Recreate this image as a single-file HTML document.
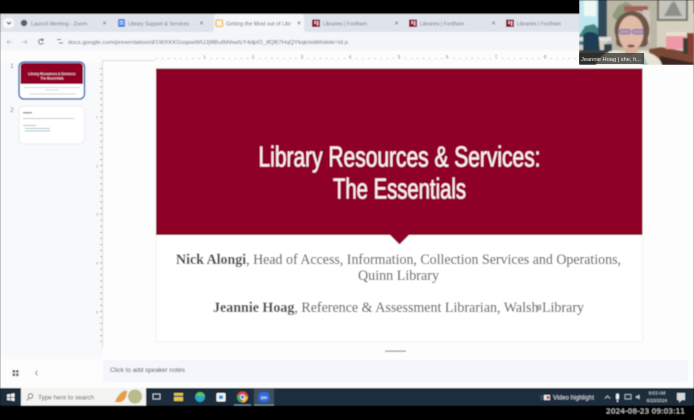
<!DOCTYPE html>
<html><head><meta charset="utf-8"><style>
html,body{margin:0;padding:0;width:694px;height:420px;overflow:hidden;background:#000}
svg{display:block;position:absolute;left:0;top:0}
text{font-family:"Liberation Sans",sans-serif}
.s{font-family:"Liberation Serif",serif}
</style></head><body>
<svg width="694" height="420" viewBox="0 0 694 420" xmlns="http://www.w3.org/2000/svg">
<defs>
<filter id="b" x="-2%" y="-2%" width="104%" height="104%"><feGaussianBlur stdDeviation="0.42"/></filter>
<filter id="b2" x="-10%" y="-10%" width="120%" height="120%"><feGaussianBlur stdDeviation="0.9"/></filter>
<filter id="b3"><feGaussianBlur stdDeviation="0.35"/></filter>
<pattern id="rx" width="6.07" height="6" patternUnits="userSpaceOnUse" x="156" y="56"><rect x="0" y="0" width="1" height="3" fill="#b0b0b0"/></pattern>
<pattern id="ry" width="6" height="6.07" patternUnits="userSpaceOnUse" x="100" y="68"><rect x="0" y="0" width="3" height="1" fill="#b0b0b0"/></pattern>
</defs>
<g filter="url(#b)">
<rect width="694" height="420" fill="#f8f9fb"/>
<rect width="694" height="14" fill="#000"/>
<!-- tabs -->
<rect y="14" width="694" height="18" fill="#dfe3eb"/>
<path d="M211 32q3 0 3-3v-12q0-3 3-3h84q3 0 3 3v12q0 3 3 3z" fill="#f4f6fa"/>
<rect x="3" y="18" width="11" height="10" rx="4" fill="#f6f7fa"/>
<path d="M7 22l2 2 2-2" stroke="#333" fill="none" stroke-width="1.100"/>
<circle cx="24" cy="23" r="3.200" fill="#5a6068"/>
<text x="31" y="25.500" font-size="5.600" fill="#777" textLength="56" lengthAdjust="spacingAndGlyphs">Launch Meeting - Zoom</text>
<text x="102.500" y="25.500" font-size="7" fill="#555">×</text>
<rect x="118" y="19" width="7" height="8" rx="1" fill="#4a84e8"/>
<rect x="119.500" y="21" width="4" height="1" fill="#dfe8fa"/><rect x="119.500" y="23.300" width="4" height="1" fill="#dfe8fa"/>
<text x="128" y="25.500" font-size="5.600" fill="#777" textLength="61" lengthAdjust="spacingAndGlyphs">Library Support &amp; Services</text>
<text x="199.500" y="25.500" font-size="7" fill="#555">×</text>
<rect x="216" y="20" width="6.500" height="6.500" rx="1" fill="none" stroke="#f2bd2c" stroke-width="1.300"/>
<text x="226" y="25.500" font-size="5.600" fill="#666" textLength="65" lengthAdjust="spacingAndGlyphs">Getting the Most out of Libr</text>
<text x="297" y="25.500" font-size="7" fill="#444">×</text>
<rect x="312" y="19.500" width="8" height="7.500" fill="#8f0a2c"/><rect x="314.500" y="21" width="1.300" height="3" fill="#f2dfe3"/><rect x="317" y="21" width="1.300" height="4.500" fill="#f2dfe3"/>
<text x="323" y="25.500" font-size="5.600" fill="#777" textLength="44" lengthAdjust="spacingAndGlyphs">Libraries | Fordham</text>
<text x="394.500" y="25.500" font-size="7" fill="#555">×</text>
<rect x="409" y="19.500" width="8" height="7.500" fill="#8f0a2c"/><rect x="411.500" y="21" width="1.300" height="3" fill="#f2dfe3"/><rect x="414" y="21" width="1.300" height="4.500" fill="#f2dfe3"/>
<text x="420" y="25.500" font-size="5.600" fill="#777" textLength="44" lengthAdjust="spacingAndGlyphs">Libraries | Fordham</text>
<text x="491.500" y="25.500" font-size="7" fill="#555">×</text>
<rect x="506" y="19.500" width="8" height="7.500" fill="#8f0a2c"/><rect x="508.500" y="21" width="1.300" height="3" fill="#f2dfe3"/><rect x="511" y="21" width="1.300" height="4.500" fill="#f2dfe3"/>
<text x="517" y="25.500" font-size="5.600" fill="#777" textLength="44" lengthAdjust="spacingAndGlyphs">Libraries | Fordham</text>
<!-- toolbar -->
<rect y="32" width="694" height="18" fill="#f3f5fa"/>
<path d="M12 42H7m2-2l-2 2 2 2" stroke="#b0b4bb" fill="none" stroke-width=".8"/>
<path d="M22 42h5m-2-2l2 2-2 2" stroke="#b0b4bb" fill="none" stroke-width=".8"/>
<path d="M43 40a2.500 2.500 0 1 0 .5 2.500M43 38.500v2h-2" stroke="#555" fill="none" stroke-width=".9"/>
<path d="M57 39.500h4M59 43h4" stroke="#666" stroke-width="1"/>
<text x="68" y="44" font-size="5.900" fill="#666" textLength="280" lengthAdjust="spacingAndGlyphs">docs.google.com/presentation/d/1WXKKGsqswWUJj9lBuBihhwfzY4dpID_tfQB7HqQYkqk/edit#slide=id.p</text>
<!-- ruler top -->
<rect y="50" width="694" height="12" fill="#fcfcfd"/>
<rect x="156" y="58" width="424" height="2.200" fill="url(#rx)"/>
<g font-size="4.500" fill="#777" text-anchor="middle">
<text x="204.500" y="58">1</text><text x="253" y="58">2</text><text x="302" y="58">3</text><text x="350" y="58">4</text><text x="399" y="58">5</text><text x="447" y="58">6</text><text x="496" y="58">7</text><text x="545" y="58">8</text>
</g>
<!-- workspace -->
<rect x="103" y="60" width="591" height="299" fill="#fdfdfd"/>
<path d="M102.500 60.500V348" stroke="#dcdde0" fill="none"/>
<path d="M102.500 60.500H155" stroke="#dcdde0" fill="none"/>
<rect x="99.500" y="68" width="3" height="274" fill="url(#ry)"/>
<g font-size="3.800" fill="#888" text-anchor="middle">
<text x="97" y="118.500">1</text><text x="97" y="167.500">2</text><text x="97" y="215.500">3</text><text x="97" y="264.500">4</text><text x="97" y="313.500">5</text>
</g>
<!-- sidebar thumbnails -->
<text x="12" y="68" font-size="6" fill="#666" text-anchor="middle">1</text>
<text x="12" y="112" font-size="6" fill="#666" text-anchor="middle">2</text>
<rect x="19" y="62" width="65.500" height="37" rx="5" fill="#fff" stroke="#4a6fb5" stroke-width="1.500"/>
<path d="M20.500 67q0-4 4-4h54.500q4 0 4 4v17h-62.500z" fill="#8f0428"/>
<text x="52" y="75" font-size="3.300" font-weight="bold" fill="#f0d8de" text-anchor="middle">Library Resources &amp; Services:</text>
<text x="52" y="79.500" font-size="3.300" font-weight="bold" fill="#f0d8de" text-anchor="middle">The Essentials</text>
<rect x="24" y="87" width="56" height="1" fill="#d4d4d8"/><rect x="45" y="89.500" width="14" height="1" fill="#d8d8dc"/><rect x="30" y="93.500" width="46" height="1" fill="#d0d0d4"/>
<rect x="19" y="106" width="65.500" height="38" rx="5" fill="#fff" stroke="#ececef" stroke-width="1"/>
<rect x="23" y="112" width="9" height="1.500" fill="#999"/>
<rect x="23" y="118" width="51" height="1" fill="#c4c8cd"/>
<rect x="23" y="125" width="13" height="1" fill="#bbb"/>
<rect x="25" y="128" width="25" height="1" fill="#a9c4cb"/><rect x="25" y="130.500" width="25" height="1" fill="#a9c4cb"/>
<!-- slide -->
<rect x="156" y="68" width="486.500" height="274" fill="#fff" stroke="#eeeeef" stroke-width=".8"/>
<rect x="156" y="68.500" width="486.500" height="166.500" fill="#8f0428"/>
<path d="M390 235h19l-9.500 9.500z" fill="#8f0428"/>
<text x="399.500" y="166.700" font-size="29" fill="#fbf1f3" stroke="#fbf1f3" stroke-width=".35" text-anchor="middle" textLength="282" lengthAdjust="spacingAndGlyphs">Library Resources &amp; Services:</text>
<text x="399.500" y="198.300" font-size="29" fill="#fbf1f3" stroke="#fbf1f3" stroke-width=".35" text-anchor="middle" textLength="133" lengthAdjust="spacingAndGlyphs">The Essentials</text>
<text class="s" x="176" y="264" font-size="14.500" fill="#666668" stroke="#666668" stroke-width=".12" textLength="445" lengthAdjust="spacingAndGlyphs"><tspan font-weight="bold" fill="#4a4a4c">Nick Alongi</tspan>, Head of Access, Information, Collection Services and Operations,</text>
<text class="s" x="358" y="280" font-size="14.500" fill="#666668" stroke="#666668" stroke-width=".12" textLength="81" lengthAdjust="spacingAndGlyphs">Quinn Library</text>
<text class="s" x="213" y="312" font-size="14.500" fill="#666668" stroke="#666668" stroke-width=".12" textLength="371" lengthAdjust="spacingAndGlyphs"><tspan font-weight="bold" fill="#4a4a4c">Jeannie Hoag</tspan>, Reference &amp; Assessment Librarian, Walsh Library</text>
<rect x="537.500" y="304.500" width="4" height="6" fill="#9a9a9c" opacity=".7"/>
<rect x="385" y="350.500" width="21" height="1.300" fill="#9c9c9c"/>
<!-- notes -->
<rect y="359" width="694" height="30" fill="#fdfdfe"/>
<rect x="103" y="360" width="585" height="22" rx="3" fill="#f4f6fb"/>
<text x="110" y="372" font-size="6.500" fill="#444" textLength="75" lengthAdjust="spacingAndGlyphs">Click to add speaker notes</text>
<g fill="#666"><rect x="12.500" y="370" width="2.600" height="2.600"/><rect x="16" y="370" width="2.600" height="2.600"/><rect x="12.500" y="373.500" width="2.600" height="2.600"/><rect x="16" y="373.500" width="2.600" height="2.600"/></g>
<path d="M37.500 370.500l-2 2.500 2 2.500" stroke="#777" fill="none" stroke-width=".8"/>
<!-- taskbar -->
<rect y="388" width="694" height="17.500" fill="#1f2f3c"/>
<rect y="405.500" width="694" height="14.500" fill="#000"/>
<g fill="#eef2f6"><path d="M7 394.500l3-.5v3h-3zM10.800 393.900l3.700-.6v3.700h-3.700zM7 397.700h3v2.800l-3-.5zM10.800 397.700h3.700v3.400l-3.700-.6z"/></g>
<rect x="21" y="388" width="125" height="17.500" fill="#f3f3f1"/>
<circle cx="30.500" cy="396" r="2.300" fill="none" stroke="#555" stroke-width=".8"/><path d="M29 398l-2 2.500" stroke="#555" stroke-width=".8"/>
<text x="38" y="399.500" font-size="6.400" fill="#555" textLength="56" lengthAdjust="spacingAndGlyphs">Type here to search</text>
<path d="M115 402q6 1 9-2 3-3 3-9-3-1-5 1-5 4-7 10z" fill="#e2a048"/>
<circle cx="135" cy="396.500" r="7" fill="#b9bb8a"/>
<rect x="153" y="394" width="7" height="5" fill="none" stroke="#c9d0d6" stroke-width=".9"/>
<rect x="174" y="393" width="9" height="8" fill="#e8c24a"/><rect x="174" y="395.500" width="9" height="1.500" fill="#34566b"/>
<circle cx="200" cy="397" r="5" fill="#2aa3c8"/><path d="M196 394.500a5 5 0 0 1 9 1.500l-5 .5z" fill="#5bc65b"/>
<rect x="216.500" y="393" width="9" height="8.500" rx="1" fill="#f3f5f7"/><rect x="219" y="395.500" width="4" height="3.500" fill="#3d8ed0"/>
<rect x="254" y="388" width="20" height="17" fill="#3e4f60"/>
<circle cx="242.500" cy="397" r="5.500" fill="#dd4b3e"/><path d="M242.500 397l5-.5a5.500 5.500 0 0 1-5 6z" fill="#f3c233"/><path d="M242.500 397l-1.500 5.300a5.500 5.500 0 0 1-3.800-7z" fill="#3ca65a"/><circle cx="242.500" cy="397" r="2.200" fill="#3f7fe0" stroke="#fff" stroke-width=".8"/>
<rect x="234" y="404.500" width="17" height=".9" fill="#7da3c7"/><rect x="254" y="404.500" width="20" height=".9" fill="#7da3c7"/>
<rect x="258.500" y="392" width="11" height="10" rx="3.500" fill="#2d6be0"/>
<text x="264" y="399" font-size="4.500" font-weight="bold" fill="#e6eefc" text-anchor="middle">zm</text>
<rect x="540" y="395" width="10" height="5" fill="#e9ecef"/><rect x="540" y="395" width="4" height="5" fill="#34465a"/><rect x="546.500" y="396" width="3" height="3" fill="#c7475a"/>
<text x="553" y="399.500" font-size="6.200" fill="#d8dde2" textLength="41" lengthAdjust="spacingAndGlyphs">Video highlight</text>
<path d="M605 398.500l2.500-2.500 2.500 2.500" stroke="#c6ccd2" fill="none" stroke-width=".8"/>
<rect x="616" y="393.500" width="3" height="6" rx="1.500" fill="#eef0f2"/><rect x="617" y="400" width="1" height="2" fill="#eef0f2"/>
<rect x="625" y="394.500" width="6" height="4.500" fill="none" stroke="#bcc3ca" stroke-width=".8"/>
<path d="M636 396h1.500l2-1.500v5l-2-1.500h-1.500z" fill="#b9c0c7"/>
<text x="657" y="394.500" font-size="4.600" fill="#d8dde2" text-anchor="middle">9:03 AM</text>
<text x="657" y="402" font-size="4.600" fill="#d8dde2" text-anchor="middle">8/23/2024</text>
<rect x="677" y="393" width="8" height="7" fill="#d5d9de"/><path d="M679 400v2.500l3-2.500z" fill="#d5d9de"/>
<text x="606" y="413.500" style="font-family:'DejaVu Sans',sans-serif" font-size="6.800" fill="#c8c8c8" textLength="79" lengthAdjust="spacingAndGlyphs">2024-08-23 09:03:11</text>
</g>
<!-- webcam -->
<clipPath id="cam"><rect x="579" y="0" width="115" height="65"/></clipPath>
<g clip-path="url(#cam)">
<g filter="url(#b2)">
<rect x="579" y="0" width="115" height="65" fill="#d6d0c0"/>
<rect x="607" y="0" width="50" height="50" fill="#bcb6a6"/>
<!-- window -->
<rect x="579" y="0" width="20" height="45" fill="#bfe8ee"/>
<rect x="584" y="0" width="12" height="16" fill="#eef8f6"/>
<path d="M579 36l6-10 9-2 5 5v16h-20z" fill="#3f8283"/>
<rect x="598" y="0" width="9" height="37" fill="#2f4a58"/>
<rect x="579" y="37" width="32" height="4" fill="#dfe2e2"/>
<!-- chair -->
<path d="M583 36q1-4 7-4 8 0 9 6l1 13-5 5h-8l-4-6z" fill="#1d3e52"/>
<rect x="604" y="44" width="8" height="7" fill="#2c4450"/>
<rect x="579" y="50" width="30" height="15" fill="#3a3c3c"/>
<!-- plant and shelf -->
<path d="M612 16l6-10 8-4 6 3 4 9-6 1-5 5-7 2z" fill="#8f9a7c"/>
<rect x="624" y="6" width="24" height="5" fill="#a5605a"/>
<rect x="643" y="10" width="7" height="32" fill="#cfc9b9"/>
<!-- picture frame -->
<rect x="657" y="0" width="31" height="21" fill="#6f6a60"/>
<rect x="659" y="0" width="27" height="19" fill="#c4c5be"/>
<path d="M664 16l8-14h3l7 14z" fill="#8f8f88"/>
<!-- desk -->
<path d="M649 49l12-2 33 6v11h-45z" fill="#7a4a34"/>
<path d="M660 56l34 7v2h-34z" fill="#3a2620"/>
<!-- box -->
<rect x="666" y="32" width="20" height="5" fill="#e8dfd0"/>
<rect x="666" y="36" width="20" height="13" fill="#ee9aa8"/>
<rect x="687" y="33" width="7" height="22" fill="#8a3c30"/>
<rect x="683" y="38" width="5" height="16" fill="#3f3a34"/>
<!-- person -->
<ellipse cx="632" cy="30" rx="17.500" ry="19" fill="#6d5847"/>
<rect x="616" y="30" width="32" height="17" rx="5" fill="#6d5847"/>
<ellipse cx="631" cy="33" rx="12.500" ry="17.500" fill="#e1bba8"/>
<rect x="619.500" y="29.500" width="11" height="4.500" rx="2" fill="#b99cb0" stroke="#6f68b0" stroke-width="1"/>
<rect x="632.500" y="29.500" width="11" height="4.500" rx="2" fill="#b99cb0" stroke="#6f68b0" stroke-width="1"/>
<ellipse cx="631" cy="46" rx="4" ry="1.500" fill="#8a4a48"/>
<rect x="625" y="48" width="13" height="8" fill="#d9b09c"/>
<path d="M596 65q3-11 20-15l13 6 13-5q17 3 20 14z" fill="#e6e3d4"/>
<path d="M642 52l6 13h-7z" fill="#9fc0c4"/>
</g>
<rect x="579" y="53" width="65" height="11" fill="#2a2825" opacity=".72"/>
<text x="581" y="61" font-size="5.800" fill="#eee" textLength="60" lengthAdjust="spacingAndGlyphs" filter="url(#b3)">Jeannie Hoag | she, h...</text>
</g>
</svg>
</body></html>
